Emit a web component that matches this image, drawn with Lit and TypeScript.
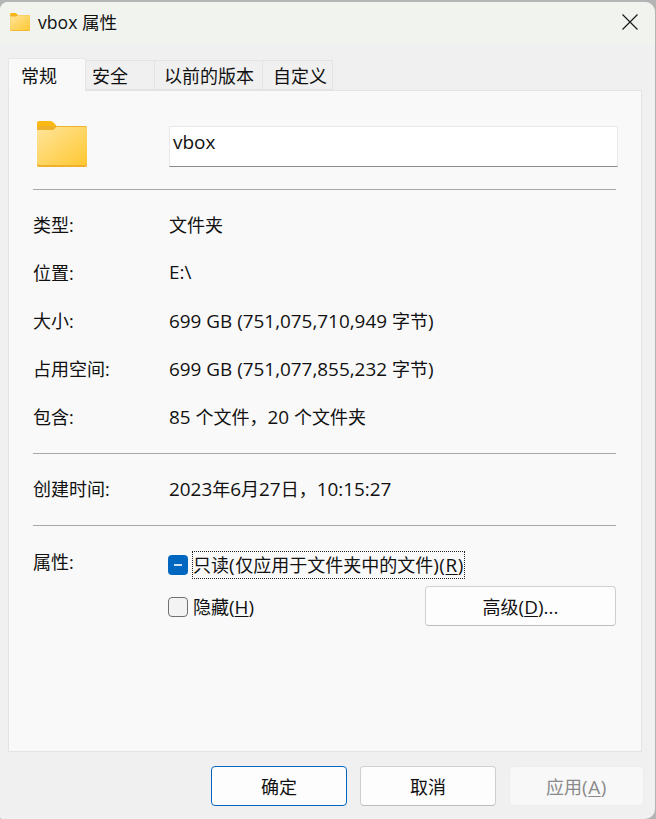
import { LitElement, html, css, svg } from "lit";
import { customElement } from "lit/decorators.js";

const folder = (cls: string, id: string) => html`<svg class=${cls} viewBox="0 0 50 46" aria-hidden="true">
  <defs>
    <linearGradient id=${id} x1="0" y1="0" x2="1" y2="1">
      <stop offset="0" stop-color="#ffe49a"/><stop offset="1" stop-color="#ffc832"/>
    </linearGradient>
  </defs>
  ${svg`<path d="M0 2a2 2 0 0 1 2-2h11c2 0 3 1 5 3l2 2.500v3H0z" fill="#fdb913"/>
  <path d="M0 9h15l4-2.500 1 0v3H0z" fill="#e9a817"/>
  <path d="M1 5h47a2 2 0 0 1 2 2v37a2 2 0 0 1-2 2H2a2 2 0 0 1-2-2V9z" fill="#efb02a"/>
  <path d="M0 9h15c2 0 3-1 4-3h29a2 2 0 0 1 2 2v34a2 2 0 0 1-2 2H2a2 2 0 0 1-2-2z" fill="url(#${id})"/>`}
</svg>`;

@customElement("app-root")
export class AppRoot extends LitElement {
  static styles = css`
    :host {
      display: block;
      width: 656px;
      height: 819px;
      background: #b4b4b4;
      font-family: "Open Sans", "Noto Sans CJK SC", sans-serif;
      font-size: 18px;
      color: #111;
      overflow: hidden;
    }
    .l { font-size: 18.9px; }
    .p { font-size: 18.9px; letter-spacing: 0.6px; }
    .window {
      box-sizing: border-box;
      height: 817px;
      margin-top: 2px;
      width: 655px;
      background: #f0f0f0;
      border-radius: 8px 10px 10px 2px;
      overflow: hidden;
      display: flex;
      flex-direction: column;
    }
    .titlebar {
      flex: none;
      box-sizing: border-box;
      height: 43px;
      background: #f1f4ee;
      display: flex;
      align-items: center;
      padding: 0 17px 4px 9px;
    }
    .tico { width: 22px; height: 18px; margin-right: 7px; }
    .ttext { flex: 1; font-size: 17.6px; white-space: nowrap; }
    .close { width: 16px; height: 16px; display: block; }
    .tabs {
      flex: none;
      height: 45px;
      box-sizing: border-box;
      padding: 13px 0 0 8px;
      display: flex;
      align-items: flex-end;
      position: relative;
      z-index: 1;
    }
    .tab {
      box-sizing: border-box;
      height: 30px;
      display: flex;
      align-items: center;
      background: #f0f0f0;
      border: 1px solid #e3e3e3;
      border-left: none;
      font-size: 18px;
      line-height: 1;
      padding-top: 2px;
      white-space: nowrap;
    }
    .tab.sel {
      height: 33px;
      width: 78px;
      margin-bottom: -1px;
      background: #f9f9f9;
      border: 1px solid #e6e6e6;
      border-bottom: none;
      border-radius: 2px 2px 0 0;
      padding-left: 12px;
    }
    .w1 { width: 69px; padding-left: 6px; }
    .w2 { width: 108px; padding-left: 9px; }
    .w3 { width: 70px; padding-left: 10px; }
    .panel {
      flex: none;
      box-sizing: border-box;
      margin-left: 8px;
      width: 634px;
      height: 662px;
      background: #f9f9f9;
      border: 1px solid #e3e3e3;
      padding: 30px 24px 0 24px;
    }
    .head {
      display: grid;
      grid-template-columns: 136px 449px;
      height: 46px;
    }
    .big { width: 50px; height: 46px; margin-left: 4px; }
    .name {
      box-sizing: border-box;
      margin-top: 5px;
      height: 41px;
      background: #fff;
      border: 1px solid #e8e8e8;
      border-bottom: 1px solid #8a8a8a;
      padding: 2px 0 0 3px;
      line-height: 26px;
      font-size: 19px;
    }
    .sep { height: 1px; background: #a8a8a8; width: 583px; }
    .sep1 { margin-top: 22px; margin-bottom: 10px; }
    .sep2 { margin-top: 13px; margin-bottom: 10px; }
    .sep3 { margin-top: 13px; margin-bottom: 11px; }
    .row {
      display: grid;
      grid-template-columns: 136px 1fr;
      height: 48px;
      align-items: center;
      white-space: nowrap;
    }
    .attrs {
      display: grid;
      grid-template-columns: 136px 1fr;
      margin-top: 1px;
      height: 100px;
    }
    .alabel { line-height: 24px; margin-top: 13px; }
    .checks { display: flex; flex-direction: column; padding-top: 15px; margin-left: -1px; }
    .chk { display: flex; align-items: center; height: 26px; white-space: nowrap; }
    .chk + .chk { justify-content: space-between; width: 448px; height: 40px; margin-top: 8px; }
    .chkl { display: flex; align-items: center; margin-top: 2px; }
    .box {
      box-sizing: border-box;
      width: 20px;
      height: 20px;
      border-radius: 4px;
      flex: none;
      margin-right: 5px;
      display: flex;
      align-items: center;
      justify-content: center;
    }
    .box.on { background: #0067c0; }
    .box.on::after { content: ""; width: 8px; height: 1.500px; background: #cfe2f3; }
    .box.off { background: #f3f3f3; border: 1px solid #707070; }
    .focus {
      outline: 1px dotted #222;
      line-height: 26px;
    }
    .lbl { line-height: 26px; }
    u { text-underline-offset: 2px; text-decoration-thickness: 1px; }
    .btn {
      box-sizing: border-box;
      display: flex;
      align-items: center;
      justify-content: center;
      height: 40px;
      background: #fdfdfd;
      border: 1px solid #d0d0d0;
      border-bottom-color: #bdbdbd;
      border-radius: 4px;
      white-space: nowrap;
    }
    .adv { width: 191px; }
    .footer {
      flex: none;
      display: flex;
      gap: 13px;
      padding: 14px 0 0 211px;
    }
    .footer .btn { width: 136px; }
    .footer .ok { border: 1px solid #0067c0; }
    .footer .dis { background: #f8f8f8; border: 1px solid #ececec; color: #8a8a8a; width: 135px; }
  `;

  render() {
    const l = (t: string) => html`<span class="l">${t}</span>`;
    const p = (t: string) => html`<span class="p">${t}</span>`;
    const rows1 = [
      [html`类型:`, html`文件夹`],
      [html`位置:`, l("E:\\")],
      [html`大小:`, html`${l("699 GB (751,075,710,949 ")}字节${l(")")}`],
      [html`占用空间:`, html`${l("699 GB (751,077,855,232 ")}字节${l(")")}`],
      [html`包含:`, html`${l("85  ")}个文件，${l("20 ")}个文件夹`],
    ];
    return html`
      <div class="window">
        <div class="titlebar">
          ${folder("tico", "g1")}
          <span class="ttext">vbox 属性</span>
          <svg class="close" viewBox="0 0 16 16" aria-hidden="true">
            <path d="M.5.500l15 15M15.500.500l-15 15" stroke="#1a1a1a" stroke-width="1.200" fill="none"/>
          </svg>
        </div>
        <div class="tabs">
          <div class="tab sel">常规</div>
          <div class="tab w1">安全</div>
          <div class="tab w2">以前的版本</div>
          <div class="tab w3">自定义</div>
        </div>
        <div class="panel">
          <div class="head">
            ${folder("big", "g2")}
            <div class="name">vbox</div>
          </div>
          <div class="sep sep1"></div>
          ${rows1.map(([k, v]) => html`<div class="row"><span>${k}</span><span>${v}</span></div>`)}
          <div class="sep sep2"></div>
          <div class="row"><span>创建时间:</span><span>${l("2023")}年${l("6")}月${l("27")}日，${l("10:15:27")}</span></div>
          <div class="sep sep3"></div>
          <div class="attrs">
            <div class="alabel">属性:</div>
            <div class="checks">
              <div class="chk">
                <span class="box on"></span>
                <span class="focus">只读${p("(")}仅应用于文件夹中的文件${p(")(")}<u class="p">R</u>${p(")")}</span>
              </div>
              <div class="chk">
                <span class="chkl"><span class="box off"></span><span class="lbl">隐藏${l("(")}<u class="l">H</u>${l(")")}</span></span>
                <div class="btn adv"><span>高级${l("(")}<u class="l">D</u>${l(")...")}</span></div>
              </div>
            </div>
          </div>
        </div>
        <div class="footer">
          <div class="btn ok">确定</div>
          <div class="btn">取消</div>
          <div class="btn dis"><span>应用${p("(")}<u class="p">A</u>${p(")")}</span></div>
        </div>
      </div>
    `;
  }
}
